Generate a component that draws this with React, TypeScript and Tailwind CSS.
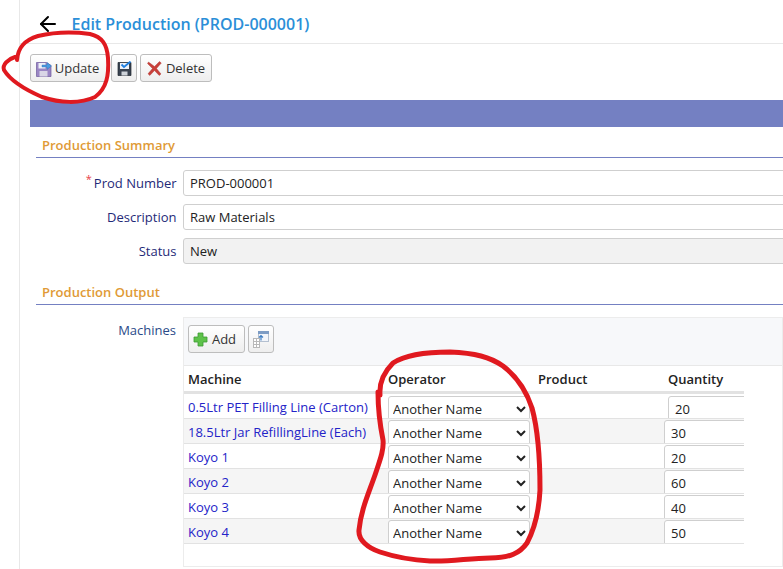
import { ArrowLeft } from "lucide-react";

const rows = [
  { name: "0.5Ltr PET Filling Line (Carton)", qty: "20", first: true },
  { name: "18.5Ltr Jar RefillingLine (Each)", qty: "30", alt: true },
  { name: "Koyo 1", qty: "20" },
  { name: "Koyo 2", qty: "60", alt: true },
  { name: "Koyo 3", qty: "40" },
  { name: "Koyo 4", qty: "50", alt: true },
];

function FloppyArrow() {
  return (
    <svg width="16" height="16" viewBox="0 0 16 16">
      <path d="M0.5 1.5h10l4.5 3v11H0.5z" fill="#9a86c4" stroke="#6d5a9c" strokeWidth="0.7" />
      <rect x="2.5" y="2" width="7" height="5.5" fill="#eef0f8" />
      <rect x="3.5" y="10" width="8" height="5.5" fill="#d9d6e6" />
      <path d="M6 4h5V1.5l4.5 3.5L11 8.5V6H6z" fill="#4a9be0" stroke="#2a6cb0" strokeWidth="0.4" />
    </svg>
  );
}

function FloppyCheck() {
  return (
    <svg width="15" height="15" viewBox="0 0 15 15">
      <path d="M1 1.5h13v13H1z" fill="#3a4350" stroke="#20262e" strokeWidth="0.7" />
      <rect x="3" y="2" width="9" height="6" fill="#eef2f8" />
      <rect x="4.5" y="10.5" width="6" height="4" fill="#cfd4da" />
      <path d="M4.5 3.5l2.5 2.5L13.5 0.5" fill="none" stroke="#1f7fe0" strokeWidth="1.8" />
    </svg>
  );
}

function RedX() {
  return (
    <svg width="15" height="15" viewBox="0 0 15 15">
      <path d="M1.5 1L7.5 5.5 12.5 0.5l1.8 1.5L9.5 7.5 14 13l-1.8 1.5L7.5 9.5 2.8 14.5 1 12.8 5.5 7.5 0.5 2.5z" fill="#c9403a" stroke="#a8322e" strokeWidth="0.4" />
    </svg>
  );
}

function GreenPlus() {
  return (
    <svg width="15" height="15" viewBox="0 0 15 15">
      <path d="M5 1h5v4h4v5h-4v4H5v-4H1V5h4z" fill="#5ec24a" stroke="#3d9a32" strokeWidth="0.8" />
    </svg>
  );
}

function TableIcon() {
  return (
    <svg width="16" height="17" viewBox="0 0 16 17" fill="none">
      <rect x="5.5" y="0.5" width="10" height="10" fill="#f2f5fa" stroke="#b4c0d0" />
      <rect x="5" y="0" width="11" height="3" fill="#7d9cc4" />
      <rect x="0.5" y="7.5" width="6" height="9" fill="#fff" stroke="#b8b8b8" />
      <path d="M0.5 10.5h6M0.5 13.5h6M3.5 7.5v9" stroke="#b8b8b8" />
      <path d="M8 9.5V5M6 6.5l2-2 2 2" stroke="#3f7fc4" strokeWidth="1.2" />
    </svg>
  );
}

function Btn({ children, className = "" }: { children: React.ReactNode; className?: string }) {
  return (
    <button className={"flex items-center justify-center rounded-[3px] border border-[#bdbdbd] bg-gradient-to-b from-white to-[#eeeeee] text-[13px] text-[#333] " + className}>
      {children}
    </button>
  );
}

function Section({ title }: { title: string }) {
  return (
    <div className="ml-[6px] flex h-[24px] items-center border-b border-[#7480c2] pl-[6px]">
      <span className="text-[13px] font-semibold text-[#e09a36]">{title}</span>
    </div>
  );
}

function Field({ label, value, req, ro }: { label: string; value: string; req?: boolean; ro?: boolean }) {
  return (
    <div className="mb-[8px] flex h-[26px] items-center">
      <div className="w-[146px] shrink-0 pr-[6.5px] pt-[1px] text-right text-[13px] text-[#1f2a78]">
        {req && <span className="mr-[2px] align-super text-[11px] leading-none text-[#e8404a]">*</span>}
        {label}
      </div>
      <div className={"-mr-[4px] flex h-[26px] flex-1 items-center rounded-[3px] border border-[#cfcfcf] pl-[6px] pt-[1px] text-[13px] text-[#222] " + (ro ? "bg-[#f2f2f2]" : "bg-white")}>
        {value}
      </div>
    </div>
  );
}

export default function App() {
  return (
    <div className="relative h-[569px] w-[783px] overflow-hidden bg-white font-['Open_Sans',sans-serif]">
      <div className="ml-[19px] h-full border-l border-[#e8e8e8]">
        <div className="flex h-[44px] items-center border-b border-[#e8e8e8] pl-[16px] pt-[5px]">
          <ArrowLeft size={24} strokeWidth={2} className="text-black" />
          <span className="ml-[11.5px] text-[16px] font-semibold text-[#2b8fd8]">Edit Production (PROD-000001)</span>
        </div>
        <div className="ml-[10px] mt-[10px] flex h-[28px] gap-[3px]">
          <Btn className="w-[78px] gap-[3px] pr-[3px] pt-[1px]"><FloppyArrow />Update</Btn>
          <Btn className="w-[26px]"><FloppyCheck /></Btn>
          <Btn className="w-[72px] gap-[4px] pt-[1px]"><RedX />Delete</Btn>
        </div>
        <div className="ml-[10px] mt-[18px] h-[27px] bg-[#7480c2]" />
        <div className="ml-[10px]">
          <div className="pt-[7px]"><Section title="Production Summary" /></div>
          <div className="ml-[7px] mt-[12px]">
            <Field label="Prod Number" value="PROD-000001" req />
            <Field label="Description" value="Raw Materials" />
            <Field label="Status" value="New" ro />
          </div>
          <div className="mt-[17px]"><Section title="Production Output" /></div>
          <div className="mt-[12px] flex">
            <div className="w-[153px] shrink-0 pr-[7px] pt-[4px] text-right text-[13px] text-[#2a4a88]">Machines</div>
            <div className="h-[250px] flex-1 border border-[#ececec]">
              <div className="flex h-[48px] gap-[3px] border-b border-[#e8e8e8] bg-[#f7f8fa] pl-[4px] pt-[7px]">
                <Btn className="h-[28px] w-[57px] gap-[4px] pr-[4px] pt-[1px]"><GreenPlus />Add</Btn>
                <Btn className="h-[28px] w-[26px]"><TableIcon /></Btn>
              </div>
              <div className="w-[560px] text-[13px]">
                <div className="flex h-[28px] items-center border-b-[3px] border-[#e2e2e2] pl-[4px] pt-[2px] font-semibold text-[#222]">
                  <div className="w-[200px] shrink-0">Machine</div>
                  <div className="w-[150px] shrink-0">Operator</div>
                  <div className="w-[130px] shrink-0">Product</div>
                  <div className="shrink-0">Quantity</div>
                </div>
                {rows.map((r) => (
                  <div key={r.name} className={"flex h-[25px] overflow-hidden border-b border-[#e2e2e2] pl-[4px] " + (r.alt ? "bg-[#f5f5f5]" : "bg-white")}>
                    <div className="flex w-[200px] shrink-0 items-center pt-[3px] text-[13px] text-[#2323c8]">{r.name}</div>
                    <div className={"w-[150px] shrink-0 " + (r.first ? "pt-[2px]" : "pt-[1px]")}>
                      <select className="h-[26px] w-[142px] rounded-[3px] border border-[#cfcfcf] bg-white text-[13px] text-[#222]">
                        <option>Another Name</option>
                      </select>
                    </div>
                    <div className={"shrink-0 " + (r.first ? "w-[130px]" : "w-[126px]")} />
                    <div className={"w-[100px] shrink-0 " + (r.first ? "pt-[2px]" : "pt-[1px]")}>
                      <div className="h-[30px] rounded-tl-[3px] border border-[#cfcfcf] bg-white pl-[6px] pt-[3px] text-[13px] text-[#222]">{r.qty}</div>
                    </div>
                  </div>
                ))}
              </div>
            </div>
          </div>
        </div>
      </div>
      <svg className="pointer-events-none absolute left-0 top-0" width="783" height="569" fill="none" stroke="#e0191f" strokeLinecap="round" strokeLinejoin="round">
        <path strokeWidth="4" d="M17 60C18 47 25 40 38 36C55 32 75 32 90 34C102 37 107 44 108 58C109 75 107 88 95 97C80 104 60 103 42 97C26 90 10 80 4 70C2 65 8 59 15 57" />
        <path strokeWidth="5" d="M380 395C379 382 384 372 393 363C405 355 425 352 450 352C475 353 490 357 503 366C516 376 526 390 532 408C538 430 540 465 540 490C539 510 535 528 527 543C520 553 510 558 490 558C470 558 450 562 430 561C410 560 395 557 380 552C368 548 358 540 359 530C361 510 368 495 375 475C380 460 384 450 383 440C380 425 378 410 378 392" />
      </svg>
    </div>
  );
}
